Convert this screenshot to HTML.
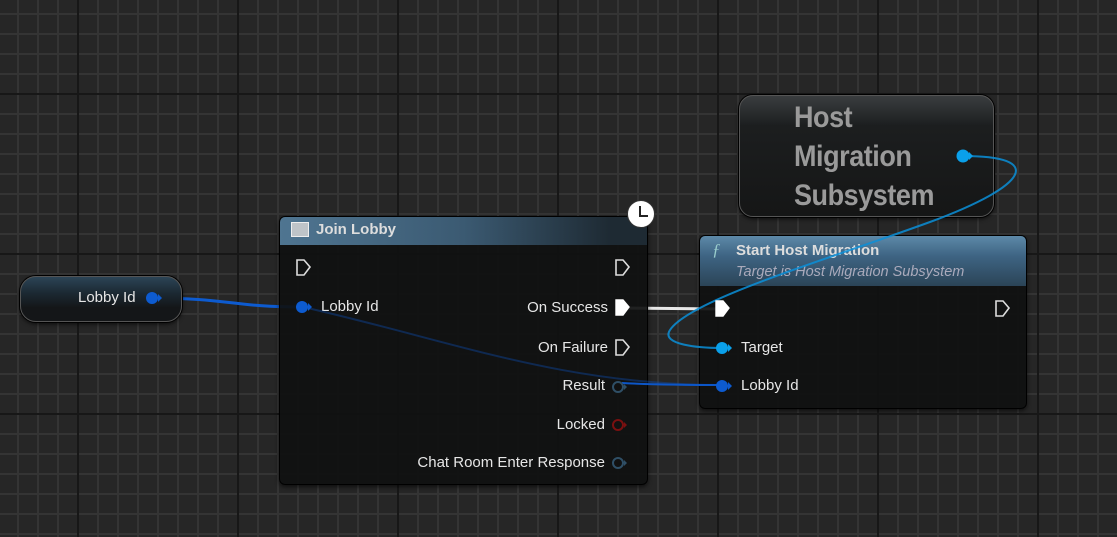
<!DOCTYPE html>
<html><head><meta charset="utf-8">
<style>
html,body{margin:0;padding:0;}
body{width:1117px;height:537px;position:relative;overflow:hidden;background:#262626;font-family:"Liberation Sans",sans-serif;}
.grid{position:absolute;inset:0;
background-image:
linear-gradient(to right,#171717 0,#171717 2px,transparent 2px),
linear-gradient(to bottom,#171717 0,#171717 2px,transparent 2px),
linear-gradient(to right,#343434 0,#343434 2px,transparent 2px),
linear-gradient(to bottom,#343434 0,#343434 2px,transparent 2px);
background-size:160px 160px,160px 160px,20px 20px,20px 20px;
background-position:77px 0,0 93px,17px 0,0 13px;}
.node{position:absolute;border-radius:6px;background:rgba(16,17,17,0.93);border:1px solid #000;box-shadow:0 2px 4px rgba(0,0,0,.6);}
.hdr{position:absolute;left:0;right:0;top:0;border-radius:5px 5px 0 0;background:linear-gradient(to right,#4f7591 0%,#3b5a72 50%,#1e2a33 90%);}
.t{position:absolute;color:#e6e6e6;font-size:15px;white-space:nowrap;}
svg{position:absolute;left:0;top:0;}
</style></head><body>
<div class="grid"></div>

<svg width="1117" height="537">
 <path d="M150 298 C230 298 230 307 303 307" stroke="#0d5bd0" stroke-width="3" fill="none"/>
 <path d="M625 308 L722 309" stroke="#e8e8e8" stroke-width="3" fill="none"/>
</svg>

<!-- Lobby Id var -->
<div class="node" style="left:20px;top:276px;width:160px;height:44px;border-radius:16px;background:linear-gradient(to bottom,#2c4456 0%,#1c2a34 35%,#141618 70%);border:1px solid #555;box-shadow:0 0 0 1px #000,0 2px 4px rgba(0,0,0,.7);"></div>
<div class="t" style="left:78px;top:289px;">Lobby Id</div>

<!-- Join Lobby -->
<div class="node" style="left:279px;top:216px;width:367px;height:267px;">
 <div class="hdr" style="height:28px;"></div>
</div>
<div style="position:absolute;left:291px;top:222px;width:18px;height:15px;background:#bfc4c8;border:1px solid #eee;box-sizing:border-box;"></div>
<div class="t" style="left:316px;top:221px;font-weight:bold;font-size:15px;color:#ddd;">Join Lobby</div>
<div style="position:absolute;left:627px;top:200px;width:28px;height:28px;border-radius:50%;background:#fff;border:1px solid #333;box-sizing:border-box;"></div>
<svg width="1117" height="537"><path d="M640 206 V216 H648" stroke="#222" stroke-width="2" fill="none"/></svg>
<div class="t" style="left:321px;top:298px;">Lobby Id</div>
<div class="t" style="right:509px;top:299px;">On Success</div>
<div class="t" style="right:509px;top:339px;">On Failure</div>
<div class="t" style="right:512px;top:377px;">Result</div>
<div class="t" style="right:512px;top:416px;">Locked</div>
<div class="t" style="right:512px;top:454px;">Chat Room Enter Response</div>

<!-- Host Migration Subsystem -->
<div class="node" style="left:739px;top:95px;width:253px;height:120px;border-radius:14px;background:linear-gradient(to bottom,#3a3d3f 0%,#1c1e1f 25%,#151616 100%);border:1px solid #555;box-shadow:0 0 0 1px #000,0 2px 4px rgba(0,0,0,.7);"></div>
<div style="position:absolute;left:794px;top:98px;color:#9a9a9a;font-weight:bold;font-size:30px;line-height:39px;font-family:'Liberation Sans',sans-serif;letter-spacing:-0.5px;transform:scaleX(0.9);transform-origin:0 0;">Host<br>Migration<br>Subsystem</div>

<!-- Start Host Migration -->
<div class="node" style="left:699px;top:235px;width:326px;height:172px;">
 <div class="hdr" style="height:50px;background:linear-gradient(to bottom,#5d89a8 0%,#3e6483 40%,#2b4457 100%);"></div>
</div>
<div class="t" style="left:712px;top:240px;color:#9cc;font-style:italic;font-family:'Liberation Serif',serif;font-size:17px;">ƒ</div>
<div class="t" style="left:736px;top:242px;font-weight:bold;font-size:15px;color:#ddd;">Start Host Migration</div>
<div class="t" style="left:736px;top:264px;font-style:italic;color:#aab;font-size:14.5px;">Target is Host Migration Subsystem</div>
<div class="t" style="left:741px;top:339px;">Target</div>
<div class="t" style="left:741px;top:377px;">Lobby Id</div>

<svg width="1117" height="537">
 <path d="M303 307 C450 340 560 385 722 385" stroke="#0c56c8" stroke-width="2" fill="none" opacity="0.35"/>
 <path d="M622 383 C660 385 690 385 722 385" stroke="#0c56c8" stroke-width="2" fill="none"/>
 <path d="M963 156 C1045 156 1030 185 930 222 C820 262 690 300 670 330 C660 345 700 348 722 348" stroke="#0a8fd8" stroke-width="2" fill="none" opacity="0.85"/>
 <g fill="none" stroke="#ddd" stroke-width="1.6">
  <path d="M297 260 H304 L310 267 L304 275 H297 Z"/>
  <path d="M616 260 H623 L629 267 L623 275 H616 Z"/>
  <path d="M616 340 H623 L629 347 L623 355 H616 Z"/>
  <path d="M996 301 H1003 L1009 308 L1003 316 H996 Z"/>
 </g>
 <path d="M616 300 H623 L629 307 L623 315 H616 Z" fill="#fff" stroke="#fff" stroke-width="1.4"/>
 <path d="M716 301 H723 L729 308 L723 316 H716 Z" fill="#fff" stroke="#fff" stroke-width="1.4"/>
 <circle cx="152" cy="298" r="6" fill="#0d5bd0"/><path d="M158 294 L162 298 L158 302Z" fill="#0d5bd0"/>
 <circle cx="302" cy="307" r="6" fill="#0d5bd0"/><path d="M308 303 L312 307 L308 311Z" fill="#0d5bd0"/>
 <circle cx="722" cy="348" r="6" fill="#0aa0ea"/><path d="M728 344 L732 348 L728 352Z" fill="#0aa0ea"/>
 <circle cx="722" cy="386" r="6" fill="#0d5bd0"/><path d="M728 382 L732 386 L728 390Z" fill="#0d5bd0"/>
 <circle cx="963" cy="156" r="6.5" fill="#0aa0ea"/><path d="M969 152 L973 156 L969 160Z" fill="#0aa0ea"/>
 <circle cx="618" cy="387" r="5" fill="#111" stroke="#2f4f66" stroke-width="2"/><path d="M624 384 L627 387 L624 390Z" fill="#2f4f66"/>
 <circle cx="618" cy="425" r="5" fill="#111" stroke="#7a1010" stroke-width="2"/><path d="M624 422 L627 425 L624 428Z" fill="#7a1010"/>
 <circle cx="618" cy="463" r="5" fill="#111" stroke="#2f4f66" stroke-width="2"/><path d="M624 460 L627 463 L624 466Z" fill="#2f4f66"/>
</svg>
</body></html>
